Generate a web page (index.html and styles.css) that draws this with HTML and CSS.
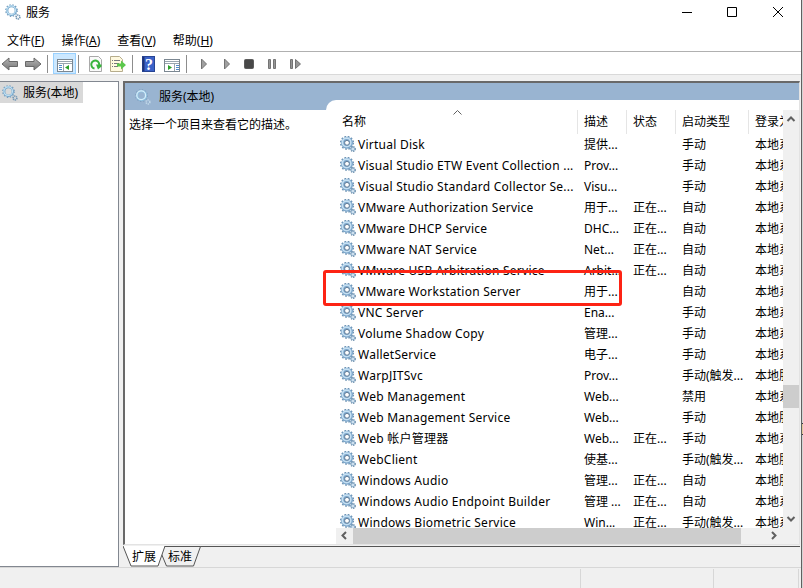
FILE: index.html
```html
<!DOCTYPE html>
<html lang="zh-CN">
<head>
    <meta charset="UTF-8">
    <title>服务</title>
    <link rel="stylesheet" href="styles.css">
</head>
<body>
    <!-- Shared icons -->
    <svg class="defs" width="0" height="0">
        <symbol id="gear" viewBox="0 0 16 16">
            <circle cx="7" cy="6.8" r="6.3" fill="none" stroke="#6f94b4" stroke-width="1.6" stroke-dasharray="1.6 1.7"/>
            <circle cx="7" cy="6.8" r="4.2" fill="none" stroke="#7ba6cb" stroke-width="3.6"/>
            <circle cx="6.6" cy="6.4" r="4.2" fill="none" stroke="#c6e0f2" stroke-width="1.7"/>
            <circle cx="7" cy="6.8" r="2.4" fill="#fff" stroke="#55718d" stroke-width=".9"/>
            <circle cx="13" cy="13" r="2.3" fill="#a9c8e0" stroke="#7897b2" stroke-width="1.4" stroke-dasharray="1.2 .8"/>
            <circle cx="13" cy="13" r=".8" fill="#fff"/>
        </symbol>
        <symbol id="gear-light" viewBox="0 0 16 16">
            <circle cx="6.5" cy="6.5" r="5.7" fill="none" stroke="#7aa0bf" stroke-width="1.4" stroke-dasharray="1.4 1.6"/>
            <circle cx="6.5" cy="6.5" r="4.3" fill="none" stroke="#74a6cb" stroke-width="2.3"/>
            <circle cx="6.2" cy="6.2" r="4.3" fill="none" stroke="#c3e2f4" stroke-width="1.1"/>
            <circle cx="13" cy="13" r="1.9" fill="none" stroke="#7799b5" stroke-width="1.7" stroke-dasharray="1.2 .6"/>
        </symbol>
        <symbol id="gear-header" viewBox="0 0 16 16">
            <circle cx="6.5" cy="6.5" r="5.8" fill="none" stroke="#7f9fbe" stroke-width="1.2" stroke-dasharray="1.4 1.6"/>
            <circle cx="6.5" cy="6.5" r="4.4" fill="none" stroke="#8cc0e0" stroke-width="2.3"/>
            <circle cx="6.2" cy="6.2" r="4.4" fill="none" stroke="#d8eefa" stroke-width="1.3"/>
            <circle cx="13" cy="13" r="1.9" fill="none" stroke="#c2d9ea" stroke-width="1.6" stroke-dasharray="1.1 .8"/>
        </symbol>
    </svg>

    <div class="window">
        <div class="title-bar">
            <svg class="app-icon" width="16" height="16"><use href="#gear-light"/></svg>
            <span class="title">服务</span>
            <svg class="controls" width="102" height="12" fill="none" stroke="#000">
                <path d="M0 6.5h10M45.500 1.500h9v9h-9zM91 1l10 10M101 1l-10 10"/>
            </svg>
        </div>

        <div class="menu-bar">
            <span>文件(<u>F</u>)</span>
            <span>操作(<u>A</u>)</span>
            <span>查看(<u>V</u>)</span>
            <span>帮助(<u>H</u>)</span>
        </div>

        <div class="toolbar">
            <svg width="310" height="22">
                <defs>
                    <linearGradient id="grey" x1="0" y1="0" x2="0" y2="1">
                        <stop offset="0" stop-color="#b5b5b5"/>
                        <stop offset="1" stop-color="#777"/>
                    </linearGradient>
                </defs>
                <!-- back / forward -->
                <path d="M2 12l7-6v3.500h8.500v5H9V18z" fill="url(#grey)" stroke="#696969"/>
                <path d="M41 12l-7-6v3.500h-8.500v5H34V18z" fill="url(#grey)" stroke="#696969"/>
                <path d="M47.500 3v18M78.500 3v18M132.500 3v18M186.500 3v18" stroke="#8d8d8d"/>
                <!-- console tree toggle -->
                <rect x="53.500" y="1.500" width="22" height="20" fill="#cce8ff" stroke="#99d1ff"/>
                <rect x="57.500" y="7.500" width="15" height="12" fill="#fff" stroke="#7b8791"/>
                <path d="M58 9.500h14M58 11.500h14M63.500 12v7" stroke="#98a5b0"/>
                <path d="M59 13.500h3M59 15.500h3M59 17.500h3" stroke="#4e8acb"/>
                <path d="M69 13v5l-4-2.500z" fill="#2ca02b"/>
                <!-- refresh -->
                <path d="M89.500 4.500h9l3 3v12h-12z" fill="#fafafa" stroke="#a9a9a9"/>
                <path d="M94.500 16.500a4 4 0 1 1 4.500-2.500" fill="none" stroke="#38b43c" stroke-width="2"/>
                <path d="M96 12.500h5.500v2L98 17.500z" fill="#38b43c"/>
                <!-- export list -->
                <path d="M110.500 4.500h9l3 3v12h-12z" fill="#fff9df" stroke="#b7ad8c"/>
                <path d="M112 8.500h1M112 11.500h1M112 14.500h1M114 8.500h6M114 11.500h5M114 14.500h4" stroke="#77777e"/>
                <path d="M117 11.500h4V8.500l5 4.500-5 4.500v-3h-4z" fill="#5cc84c"/>
                <!-- help -->
                <rect x="142.500" y="4.500" width="12" height="15" fill="#3b62c8" stroke="#274493"/>
                <path d="M143.500 5v14" stroke="#1e3377" stroke-width="2"/>
                <text class="help-mark" x="145" y="18">?</text>
                <!-- action pane toggle -->
                <rect x="164.500" y="7.500" width="15" height="12" fill="#fff" stroke="#7b8791"/>
                <path d="M165 9.500h14M165 11.500h14M174.500 12v7" stroke="#98a5b0"/>
                <path d="M176 13.500h3M176 15.500h3M176 17.500h3" stroke="#4e8acb"/>
                <path d="M168 13v5l4-2.500z" fill="#2ca02b"/>
                <!-- service controls -->
                <path d="M201.500 7v10l5-5zM224.500 7v10l5-5z" fill="#a0a0a0" stroke="#747474"/>
                <rect x="244.500" y="7.500" width="9" height="9" rx="1" fill="#484848" stroke="#5c5c5c"/>
                <path d="M268.500 7.500h2v9h-2zM273.500 7.500h2v9h-2zM290.500 7.500h2v9h-2zM295.500 7.500v9l5-4.500z" fill="#969696" stroke="#747474"/>
            </svg>
        </div>

        <div class="content">
            <div class="tree-pane">
                <div class="tree-item">
                    <svg width="16" height="16"><use href="#gear-light"/></svg>
                    <span>服务(本地)</span>
                </div>
            </div>

            <div class="right-side">
                <div class="main-pane">
                    <div class="pane-header">
                        <svg width="16" height="16"><use href="#gear-header"/></svg>
                        <span>服务(本地)</span>
                    </div>
                    <div class="pane-body">
                        <div class="description">选择一个项目来查看它的描述。</div>
                        <div class="list-pane">
                            <div class="list-view">
                                <div class="list-head">
                                    <span>名称</span>
                                    <span>描述</span>
                                    <span>状态</span>
                                    <span>启动类型</span>
                                    <span>登录为</span>
                                    <svg class="sort-arrow" width="9" height="5" fill="none" stroke="#606060"><path d="M.5 4.500l4-4 4 4"/></svg>
                                </div>
                                <div class="list-rows" id="rows"></div>
                            </div>
                            <div class="v-scroll">
                                <svg width="16" height="18" fill="none" stroke="#606060" stroke-width="2"><path d="M4.500 11l3.500-3.500 3.500 3.500"/></svg>
                                <div class="v-thumb"></div>
                                <svg width="16" height="18" fill="none" stroke="#606060" stroke-width="2"><path d="M4.500 7l3.500 3.500L11.500 7"/></svg>
                            </div>
                            <div class="h-scroll">
                                <svg width="17" height="16" fill="none" stroke="#606060" stroke-width="2"><path d="M10 4L6.500 7.500 10 11"/></svg>
                                <div class="h-thumb"></div>
                                <svg width="17" height="16" fill="none" stroke="#606060" stroke-width="2"><path d="M7 4l3.500 3.500L7 11"/></svg>
                            </div>
                            <div class="highlight"></div>
                        </div>
                    </div>
                </div>
                <div class="tabs">
                    <svg class="tab-shape" width="80" height="21">
                        <path d="M39.500.5h38l-7 19.500H43.500l-5-12z" fill="#f0f0f0" stroke="#555"/>
                        <path d="M0 0l8 20h27l7-20z" fill="#fff"/>
                        <path d="M0 0l8 20h27l7-20" fill="none" stroke="#555"/>
                    </svg>
                    <span>扩展</span>
                    <span>标准</span>
                </div>
            </div>
        </div>

        <div class="status-bar">
            <div></div>
            <div></div>
            <div></div>
        </div>
    </div>
    <div class="behind"><i></i></div>

    <script>
        // name, description, status, startup type, log on as
        const services = [
            ['Virtual Disk', '提供...', '', '手动', '本地系统'],
            ['Visual Studio ETW Event Collection ...', 'Prov...', '', '手动', '本地系统'],
            ['Visual Studio Standard Collector Se...', 'Visu...', '', '手动', '本地系统'],
            ['VMware Authorization Service', '用于...', '正在...', '自动', '本地系统'],
            ['VMware DHCP Service', 'DHC...', '正在...', '自动', '本地系统'],
            ['VMware NAT Service', 'Net...', '正在...', '自动', '本地系统'],
            ['VMware USB Arbitration Service', 'Arbit...', '正在...', '自动', '本地系统'],
            ['VMware Workstation Server', '用于...', '', '自动', '本地系统'],
            ['VNC Server', 'Ena...', '', '手动', '本地系统'],
            ['Volume Shadow Copy', '管理...', '', '手动', '本地系统'],
            ['WalletService', '电子...', '', '手动', '本地系统'],
            ['WarpJITSvc', 'Prov...', '', '手动(触发...', '本地服务'],
            ['Web Management', 'Web...', '', '禁用', '本地系统'],
            ['Web Management Service', 'Web...', '', '手动', '本地服务'],
            ['Web 帐户管理器', 'Web...', '正在...', '手动', '本地系统'],
            ['WebClient', '使基...', '', '手动(触发...', '本地服务'],
            ['Windows Audio', '管理...', '正在...', '自动', '本地服务'],
            ['Windows Audio Endpoint Builder', '管理 ...', '正在...', '自动', '本地系统'],
            ['Windows Biometric Service', 'Win...', '正在...', '手动(触发...', '本地系统']
        ];

        const rows = document.getElementById('rows');
        services.forEach(service => {
            const row = document.createElement('div');
            row.className = 'row';
            service.forEach(text => {
                const cell = document.createElement('span');
                cell.textContent = text;
                row.appendChild(cell);
            });
            row.insertAdjacentHTML('afterbegin', '<svg width="16" height="16"><use href="#gear"/></svg>');
            rows.appendChild(row);
        });
    </script>
</body>
</html>
```

FILE: styles.css
```css
* {
    box-sizing: border-box;
}

body {
    margin: 0;
    display: flex;
    width: 803px;
    height: 588px;
    overflow: hidden;
    background-color: #fff;
    color: #000;
    font-family: "Noto Sans", "Noto Sans CJK SC", sans-serif;
    font-size: 12px;
    line-height: 20px;
    white-space: nowrap;
}

svg {
    display: block;
    flex: none;
}

.defs {
    position: absolute;
}

.window {
    display: flex;
    flex-direction: column;
    width: 802px;
    height: 588px;
    border-right: 1px solid #606060;
    background-color: #f0f0f0;
}

.behind {
    width: 1px;
    padding-top: 423px;
    background-color: #d4d4d4;
}

.behind i {
    display: block;
    height: 12px;
    border-top: 1px solid #334;
    border-bottom: 1px solid #334;
    background-color: #e2ca9c;
}

.title-bar {
    display: flex;
    align-items: center;
    height: 28px;
    padding: 0 17px 4px 5px;
    background-color: #fff;
}

.title {
    flex: 1;
    margin-left: 5px;
    padding-top: 2px;
}

.menu-bar {
    display: flex;
    gap: 17px;
    height: 24px;
    padding: 3px 7px 0;
    border-bottom: 1px solid #b0b0b0;
    background-color: #fff;
}

.toolbar {
    height: 23px;
    border-bottom: 1px solid #d9d9d9;
    background-color: #fff;
}

.help-mark {
    fill: #fff;
    font-family: "Liberation Serif", serif;
    font-size: 16px;
    font-weight: bold;
}

.content {
    display: flex;
    gap: 4px;
    height: 492px;
    padding-top: 6px;
}

.tree-pane {
    width: 119px;
    border: solid #828790;
    border-width: 1px 1px 1px 0;
    background-color: #fff;
}

.tree-item {
    display: flex;
    align-items: center;
    gap: 5px;
    width: 83px;
    height: 21px;
    padding-left: 2px;
    background-color: #d9d9d9;
}

.right-side {
    display: flex;
    flex-direction: column;
    width: 677px;
}

.main-pane {
    height: 464px;
    border: 1px solid #e3e3e3;
    border-top: 2px solid #696969;
    border-left: 2px solid #696969;
    background-color: #fff;
}

.pane-header {
    display: flex;
    align-items: center;
    gap: 8px;
    height: 27px;
    padding: 1px 0 0 10px;
    background-color: #99b4d1;
}

.pane-body {
    display: flex;
    height: 434px;
}

.description {
    width: 201px;
    padding: 5px 4px;
}

.list-pane {
    display: grid;
    position: relative;
    grid-template-columns: 447px 16px;
    grid-template-rows: 428px 16px;
    margin-top: -10px;
    padding-left: 10px;
    border-top-left-radius: 10px;
    background-color: #fff;
}

.list-view {
    padding-top: 10px;
    overflow: hidden;
}

.list-head,
.row {
    display: grid;
    position: relative;
    grid-template-columns: 242px 49px 49px 73px 100px;
}

.list-head {
    height: 24px;
}

.list-head span {
    padding: 2px 0 0 6px;
    border-right: 1px solid #e5e5e5;
}

.sort-arrow {
    position: absolute;
    top: 0;
    left: 117px;
}

.row {
    height: 21px;
    grid-template-columns: 22px 220px 49px 49px 73px 60px;
}

.row svg {
    margin: 2px 0 0 4px;
}

.row span {
    padding: 1px 0 0 6px;
}

.row span:nth-child(2) {
    padding-left: 0;
    letter-spacing: .25px;
}

.v-scroll {
    display: flex;
    flex-direction: column;
    margin-top: 10px;
    background-color: #f0f0f0;
}

.v-thumb {
    height: 23px;
    margin: 257px 0 102px 0;
    background-color: #cdcdcd;
}

.h-scroll {
    display: flex;
    grid-column: 1 / 3;
    background-color: #f0f0f0;
}

.h-thumb {
    width: 388px;
    margin-right: 24px;
    background-color: #cdcdcd;
}

.highlight {
    position: absolute;
    top: 170px;
    left: -3px;
    width: 299px;
    height: 36px;
    border: 3px solid #fd2314;
    border-radius: 3px;
}

.tabs {
    display: flex;
    position: relative;
    gap: 12px;
    height: 21px;
    margin-top: 1px;
    padding-left: 9px;
    border-top: 1px solid #555;
}

.tab-shape {
    position: absolute;
    top: -1px;
    left: 0;
}

.tabs span {
    position: relative;
}

.status-bar {
    display: grid;
    flex: 1;
    grid-template-columns: 581px 133px 85px;
    padding-top: 1px;
    border-top: 1px solid #d7d7d7;
}

.status-bar div {
    border-right: 1px solid #d7d7d7;
}
```
